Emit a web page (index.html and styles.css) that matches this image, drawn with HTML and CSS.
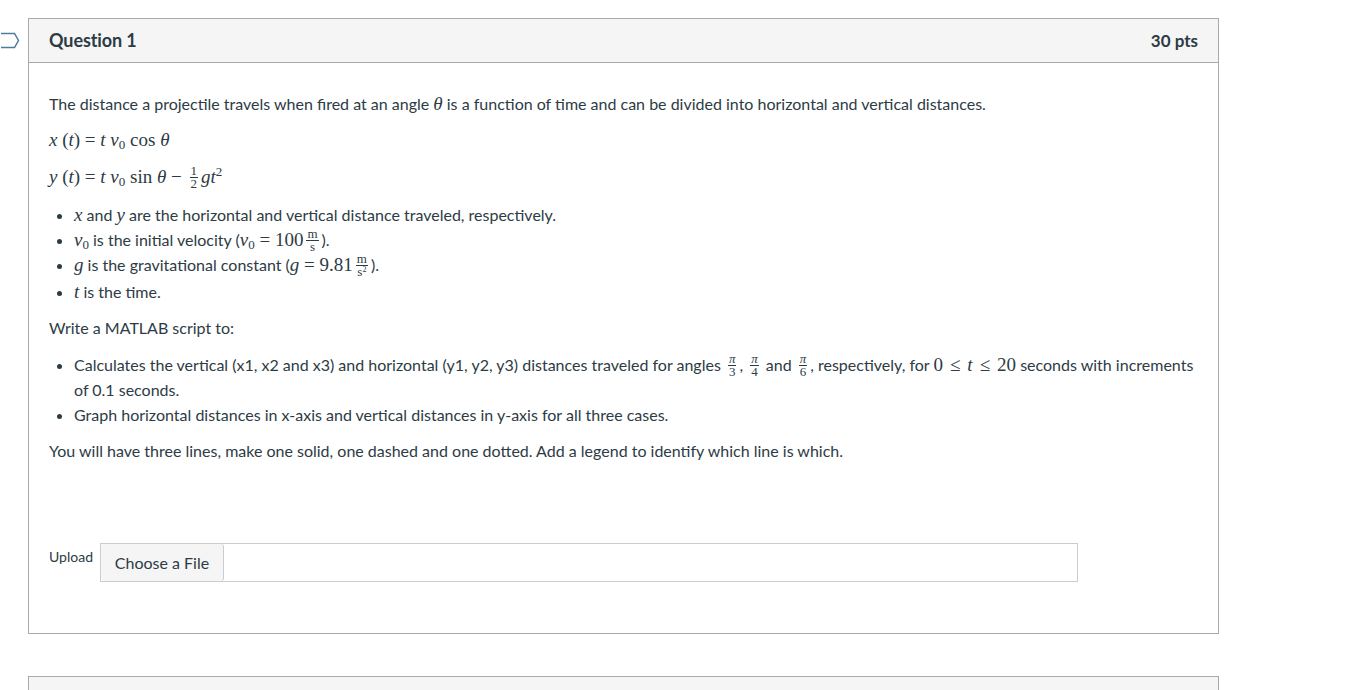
FILE: index.html
```html
<!DOCTYPE html>
<html>
<head>
<meta charset="utf-8">
<link rel="stylesheet" href="styles.css">
</head>
<body>
<div class="quiz">
  <div class="question">
    <svg class="flag" width="20" height="17" viewBox="0 0 20 17"><path d="M-2 1.5 H13.5 L17.5 8.5 L13.5 15.5 H-2" fill="none" stroke="#4f7c9c" stroke-width="1.5"/></svg>
    <div class="q-header">
      <span class="q-title">Question 1</span>
      <span class="q-pts">30 pts</span>
    </div>
    <div class="q-body">
      <p>The distance a projectile travels when fired at an angle <span class="m">θ</span> is a function of time and can be divided into horizontal and vertical distances.</p>
      <p class="eq"><span class="m">x</span><span class="r"> (</span><span class="m">t</span><span class="r">) = </span><span class="m">t v</span><span class="r sub">0</span><span class="r"> cos </span><span class="m">θ</span></p>
      <p class="eq"><span class="m">y</span><span class="r"> (</span><span class="m">t</span><span class="r">) = </span><span class="m">t v</span><span class="r sub">0</span><span class="r"> sin </span><span class="m">θ</span><span class="r"> − </span><span class="frac"><span class="num">1</span><span class="den">2</span></span><span class="m">gt</span><span class="r sup">2</span></p>
      <ul>
        <li><span class="m">x</span> and <span class="m">y</span> are the horizontal and vertical distance traveled, respectively.</li>
        <li><span class="m">v</span><span class="r sub">0</span> is the initial velocity (<span class="m">v</span><span class="r sub">0</span><span class="r"> = 100</span><span class="frac"><span class="num">m</span><span class="den">s</span></span>).</li>
        <li class="tall"><span class="m">g</span> is the gravitational constant (<span class="m">g</span><span class="r"> = 9.81</span><span class="frac"><span class="num">m</span><span class="den">s<sup>2</sup></span></span>).</li>
        <li><span class="m">t</span> is the time.</li>
      </ul>
      <p>Write a MATLAB script to:</p>
      <ul>
        <li>Calculates the vertical (x1, x2 and x3) and horizontal (y1, y2, y3) distances traveled for angles <span class="frac"><span class="num"><i>π</i></span><span class="den">3</span></span>, <span class="frac"><span class="num"><i>π</i></span><span class="den">4</span></span> and <span class="frac"><span class="num"><i>π</i></span><span class="den">6</span></span>, respectively, for <span class="r">0<span class="rel">≤</span></span><span class="m">t</span><span class="r"><span class="rel">≤</span>20</span> seconds with increments of 0.1 seconds.</li>
        <li>Graph horizontal distances in x-axis and vertical distances in y-axis for all three cases.</li>
      </ul>
      <p>You will have three lines, make one solid, one dashed and one dotted. Add a legend to identify which line is which.</p>
      <div class="upload">
        <span class="up-label">Upload</span>
        <div class="file-box">
          <span class="file-btn">Choose a File</span>
        </div>
      </div>
    </div>
  </div>
  <div class="question next">
    <div class="q-header"></div>
  </div>
</div>
</body>
</html>
```
FILE: styles.css
```css
html, body {
  margin: 0;
  padding: 0;
  background: #fff;
}
body {
  font-family: Lato, "Liberation Sans", sans-serif;
  color: #2d3b45;
  font-size: 16px;
}
.quiz {
  padding: 18px 0 0 28px;
  width: 1191px;
}
.question {
  position: relative;
  border: 1px solid #aaaaaa;
  margin-bottom: 42px;
}
.flag {
  position: absolute;
  left: -28px;
  top: 13px;
}
.q-header {
  background: #f5f5f5;
  border-bottom: 1px solid #aaaaaa;
  height: 44px;
  box-sizing: border-box;
  display: flex;
  align-items: center;
  justify-content: space-between;
  padding: 0 20px 1px;
  font-weight: 700;
}
.q-title {
  font-size: 18px;
  letter-spacing: -0.1px;
}
.q-pts {
  font-size: 17px;
}
.q-body {
  padding: 29px 20px 51px;
}
p {
  margin: 0 0 12px;
  line-height: 24px;
}
.eq {
  margin-bottom: 13px;
}
.m {
  font-family: "Liberation Serif", serif;
  font-style: italic;
  font-size: 19px;
  line-height: 1;
}
.r {
  font-family: "Liberation Serif", serif;
  font-size: 19px;
  line-height: 1;
}
.rel {
  margin: 0 7px;
}
.sub {
  font-size: 13px;
  position: relative;
  top: 3px;
}
.sup {
  font-size: 13px;
  position: relative;
  top: -7px;
}
.frac {
  display: inline-block;
  vertical-align: -5px;
  font-family: "Liberation Serif", serif;
  font-size: 13px;
  line-height: 10px;
  margin: -5px 3px;
  text-align: center;
}
.frac .num {
  display: block;
  border-bottom: 1px solid #2d3b45;
  padding: 0 1px 1px;
}
.frac .den {
  display: block;
  padding-top: 1px;
}
.frac .den sup {
  font-size: 8px;
  line-height: 0;
  vertical-align: 4px;
}
ul {
  margin: 0 0 12px;
  padding-left: 25px;
}
li {
  line-height: 25px;
}
li.tall {
  padding-bottom: 2px;
}
.upload {
  display: flex;
  align-items: flex-start;
  margin-top: 80px;
}
.up-label {
  font-size: 14px;
  line-height: 18px;
  margin-top: 5px;
  width: 51px;
}
.file-box {
  width: 976px;
  height: 37px;
  border: 1px solid #c7cdd1;
  display: flex;
}
.file-btn {
  background: #f5f5f5;
  border-right: 1px solid #c7cdd1;
  border-radius: 3px;
  width: 122px;
  display: flex;
  align-items: center;
  justify-content: center;
  font-size: 16px;
}
.next .q-header {
  height: 40px;
}
```
